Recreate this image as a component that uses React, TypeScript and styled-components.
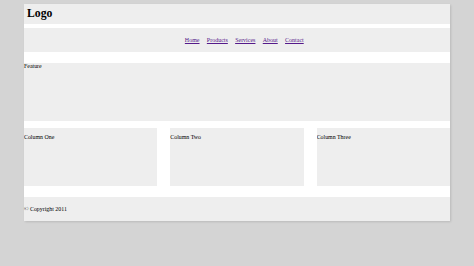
import React from "react";
import styled, { createGlobalStyle } from "styled-components";

const GlobalStyle = createGlobalStyle`
  html, body {
    margin: 0;
    padding: 0;
    background: #d4d4d4;
    font-family: "Liberation Serif", "Times New Roman", serif;
    font-size: 5.9px;
    color: #000;
  }
`;

const Page = styled.div`
  width: 474px;
  height: 266px;
  padding-top: 4px;
  box-sizing: border-box;
`;

const Wrapper = styled.div`
  width: 426px;
  margin: 0 auto;
  background: #fff;
  box-shadow: 1px 1px 2px rgba(0, 0, 0, 0.12);
  display: flex;
  flex-direction: column;
`;

const Header = styled.header`
  height: 20px;
  background: #eeeeee;
  display: flex;
  align-items: center;
  padding-left: 3px;
`;

const Logo = styled.h1`
  margin: 0;
  font-size: 11.7px;
  font-weight: bold;
  line-height: 1;
`;

const Nav = styled.nav`
  height: 24px;
  margin-top: 4px;
  background: #eeeeee;
  display: flex;
  align-items: center;
  justify-content: center;
  padding-left: 14.6px;
`;

const NavList = styled.ul`
  list-style: none;
  margin: 0;
  padding: 0;
  display: flex;
  gap: 7.3px;
`;

const NavLink = styled.a`
  color: #551a8b;
  text-decoration: underline;
  font-size: 6px;
`;

const Feature = styled.section`
  height: 58px;
  margin-top: 11px;
  background: #eeeeee;
  line-height: 1.15;
`;

const Columns = styled.div`
  margin-top: 7px;
  display: grid;
  grid-template-columns: repeat(3, 1fr);
  column-gap: 13px;
`;

const Column = styled.div`
  height: 58px;
  background: #eeeeee;
  overflow: hidden;
`;

const ColumnTitle = styled.p`
  margin: 5.85px 0 0;
  line-height: 1.15;
`;

const Footer = styled.footer`
  height: 24px;
  margin-top: 11px;
  background: #eeeeee;
  display: flex;
  align-items: center;
`;

const links = ["Home", "Products", "Services", "About", "Contact"];
const columns = ["Column One", "Column Two", "Column Three"];

export default function App() {
  return (
    <>
      <GlobalStyle />
      <Page>
        <Wrapper>
          <Header>
            <Logo>Logo</Logo>
          </Header>
          <Nav>
            <NavList>
              {links.map((l) => (
                <li key={l}>
                  <NavLink href="#">{l}</NavLink>
                </li>
              ))}
            </NavList>
          </Nav>
          <Feature>Feature</Feature>
          <Columns>
            {columns.map((c) => (
              <Column key={c}>
                <ColumnTitle>{c}</ColumnTitle>
              </Column>
            ))}
          </Columns>
          <Footer>© Copyright 2011</Footer>
        </Wrapper>
      </Page>
    </>
  );
}
